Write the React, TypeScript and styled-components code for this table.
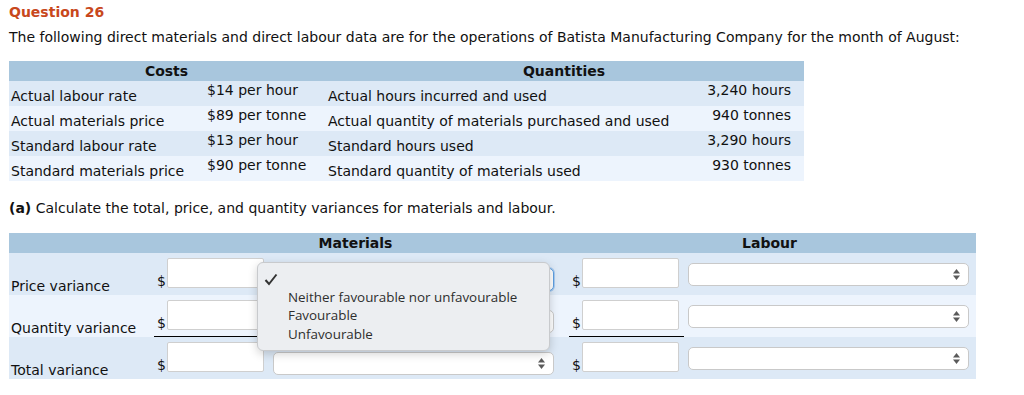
import React from "react";
import styled, { createGlobalStyle } from "styled-components";

const GlobalStyle = createGlobalStyle`
  body {
    margin: 0;
    background: #fff;
    font-family: "DejaVu Sans", Verdana, sans-serif;
    color: #111;
  }
`;

const costs = [
  ["Actual labour rate", "$14 per hour", "Actual hours incurred and used", "3,240 hours"],
  ["Actual materials price", "$89 per tonne", "Actual quantity of materials purchased and used", "940 tonnes"],
  ["Standard labour rate", "$13 per hour", "Standard hours used", "3,290 hours"],
  ["Standard materials price", "$90 per tonne", "Standard quantity of materials used", "930 tonnes"],
];

const variances = ["Price variance", "Quantity variance", "Total variance"];

const menuOptions = ["", "Neither favourable nor unfavourable", "Favourable", "Unfavourable"];

export default function App() {
  return (
    <Page>
      <GlobalStyle />
      <Title>Question 26</Title>
      <Intro>
        The following direct materials and direct labour data are for the operations of Batista
        Manufacturing Company for the month of August:
      </Intro>

      <DataTable>
        <colgroup>
          <col style={{ width: 194 }} />
          <col style={{ width: 121 }} />
          <col style={{ width: 360 }} />
          <col style={{ width: 120 }} />
        </colgroup>
        <thead>
          <tr>
            <HeadCell colSpan={2}>Costs</HeadCell>
            <HeadCell colSpan={2}>Quantities</HeadCell>
          </tr>
        </thead>
        <tbody>
          {costs.map((row, i) => (
            <Row key={row[0]} $light={i % 2 === 1}>
              <LabelCell>{row[0]}</LabelCell>
              <ValueCell>{row[1]}</ValueCell>
              <LabelCell $indent>{row[2]}</LabelCell>
              <ValueCell $right>{row[3]}</ValueCell>
            </Row>
          ))}
        </tbody>
      </DataTable>

      <Instruction>
        <b>(a)</b> Calculate the total, price, and quantity variances for materials and labour.
      </Instruction>

      <VarianceTable>
        <colgroup>
          <col style={{ width: 139 }} />
          <col style={{ width: 120 }} />
          <col style={{ width: 295 }} />
          <col style={{ width: 121 }} />
          <col style={{ width: 292 }} />
        </colgroup>
        <thead>
          <tr>
            <HeadCell />
            <HeadCell colSpan={2}>Materials</HeadCell>
            <HeadCell colSpan={2}>Labour</HeadCell>
          </tr>
        </thead>
        <tbody>
          {variances.map((label, i) => (
            <VarRow key={label} $light={i % 2 === 1}>
              <VarLabel>{label}</VarLabel>
              <AmountCell>
                <Amount $underline={i === 1}>
                  <Dollar>$</Dollar>
                  <AmountInput />
                </Amount>
              </AmountCell>
              <SelectCell $bottom>
                <SelectWrap>
                  <SelectBox $focused={i === 0}>
                    <Arrows />
                  </SelectBox>
                  {i === 0 && (
                    <Menu>
                      {menuOptions.map((opt, j) => (
                        <MenuItem key={j}>
                          {j === 0 && <Check />}
                          {opt}
                        </MenuItem>
                      ))}
                    </Menu>
                  )}
                </SelectWrap>
              </SelectCell>
              <AmountCell>
                <Amount $underline={i === 1}>
                  <Dollar>$</Dollar>
                  <AmountInput />
                </Amount>
              </AmountCell>
              <SelectCell>
                <SelectBox>
                  <Arrows />
                </SelectBox>
              </SelectCell>
            </VarRow>
          ))}
        </tbody>
      </VarianceTable>
    </Page>
  );
}

function Arrows() {
  return (
    <ArrowIcon width="7" height="11" viewBox="0 0 7 11">
      <path d="M3.5 0 L7 4.5 L0 4.5 Z" fill="#5a5a5a" />
      <path d="M0 6.5 L7 6.5 L3.5 11 Z" fill="#5a5a5a" />
    </ArrowIcon>
  );
}

function Check() {
  return (
    <CheckIcon width="14" height="13" viewBox="0 0 14 13">
      <path d="M1.5 7 L5 11 L12.5 1.5" fill="none" stroke="#333" strokeWidth="2" />
    </CheckIcon>
  );
}

const Page = styled.div`
  padding: 3px 9px;
`;

const Title = styled.h2`
  margin: 0;
  font-size: 14px;
  line-height: 18px;
  font-weight: bold;
  color: #c8481c;
`;

const Intro = styled.p`
  margin: 7px 0 15px;
  font-size: 14px;
  line-height: 18px;
`;

const DataTable = styled.table`
  border-collapse: collapse;
  table-layout: fixed;
  width: 795px;
  font-size: 14px;
`;

const HeadCell = styled.th`
  background: #a8c6dd;
  height: 20px;
  padding: 0;
  font-size: 14px;
  font-weight: bold;
  text-align: center;
`;

const Row = styled.tr<{ $light: boolean }>`
  background: ${(p) => (p.$light ? "#edf4fd" : "#dde9f6")};
  height: 25px;
`;

const LabelCell = styled.td<{ $indent?: boolean }>`
  vertical-align: bottom;
  padding: 0 0 2px ${(p) => (p.$indent ? "4px" : "2px")};
  white-space: nowrap;
`;

const ValueCell = styled.td<{ $right?: boolean }>`
  vertical-align: top;
  padding: 1px ${(p) => (p.$right ? "13px" : "4px")} 0 4px;
  text-align: ${(p) => (p.$right ? "right" : "left")};
  white-space: nowrap;
`;

const Instruction = styled.p`
  margin: 18px 0 16px;
  font-size: 14px;
  line-height: 18px;
`;

const VarianceTable = styled.table`
  border-collapse: collapse;
  table-layout: fixed;
  width: 967px;
  font-size: 14px;
`;

const VarRow = styled.tr<{ $light: boolean }>`
  background: ${(p) => (p.$light ? "#edf4fd" : "#dde9f6")};
  height: 42px;
`;

const VarLabel = styled.td`
  vertical-align: bottom;
  padding: 0 0 1px 2px;
  white-space: nowrap;
`;

const AmountCell = styled.td`
  padding: 0;
  vertical-align: top;
`;

const Amount = styled.div<{ $underline: boolean }>`
  display: flex;
  align-items: flex-end;
  gap: 1px;
  margin-left: 6px;
  padding: 5px 3px 6px;
  border-bottom: 1px solid ${(p) => (p.$underline ? "#000" : "transparent")};
`;

const Dollar = styled.span`
  font-size: 14px;
  line-height: 15px;
  margin-bottom: -1px;
`;

const AmountInput = styled.div`
  width: 97px;
  height: 30px;
  box-sizing: border-box;
  background: #fff;
  border: 1px solid #cfcfcf;
  border-radius: 2px;
`;

const SelectCell = styled.td<{ $bottom?: boolean }>`
  vertical-align: ${(p) => (p.$bottom ? "bottom" : "middle")};
  padding: 0 0 ${(p) => (p.$bottom ? "4px" : "0")} ${(p) => (p.$bottom ? "5px" : "4px")};
`;

const SelectWrap = styled.div`
  position: relative;
`;

const SelectBox = styled.div<{ $focused?: boolean }>`
  display: flex;
  align-items: center;
  justify-content: flex-end;
  width: 281px;
  height: 23px;
  box-sizing: border-box;
  padding-right: 8px;
  background: #fff;
  border: 1px solid ${(p) => (p.$focused ? "#5e9fe0" : "#c9c9c9")};
  box-shadow: ${(p) => (p.$focused ? "0 0 0 1px #a8cbf0" : "none")};
  border-radius: 5px;
`;

const ArrowIcon = styled.svg`
  display: block;
`;

const Menu = styled.div`
  position: absolute;
  left: -16px;
  top: -6px;
  width: 293px;
  box-sizing: border-box;
  padding: 6px 0 7px;
  background: #eceef1;
  border: 1px solid #c8cacd;
  border-radius: 6px;
  box-shadow: 0 3px 10px rgba(0, 0, 0, 0.18);
  font-family: "Open Sans", Arial, sans-serif;
  font-size: 13.4px;
  color: #2e2e2e;
  z-index: 2;
`;

const MenuItem = styled.div`
  position: relative;
  height: 18.5px;
  line-height: 18.5px;
  padding-left: 30px;
  white-space: nowrap;
`;

const CheckIcon = styled.svg`
  position: absolute;
  left: 6px;
  top: 4px;
`;
